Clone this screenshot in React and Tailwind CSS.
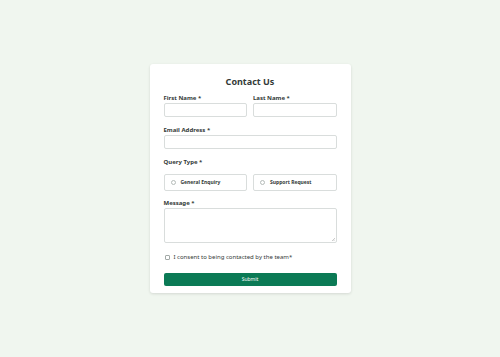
export default function App() {
  return (
    <div className="min-h-[357px] w-full bg-[#f0f6ef] pt-[64px] font-['Noto_Sans',sans-serif] text-[#333a38]">
      <div className="mx-auto w-[201px] rounded-[3px] bg-white px-[14px] pt-[12px] pb-[7px] shadow-[0_1px_3px_rgba(0,0,0,0.12)]">
        <h1 className="text-center text-[9px] leading-[12px] font-bold">Contact Us</h1>

        <div className="mt-[6px] flex gap-[6px]">
          <div className="flex-1">
            <p className="mb-[1px] text-[6px] leading-[8px] font-bold">First Name *</p>
            <div className="h-[14px] rounded-[2px] border border-[#d9dddc]" />
          </div>
          <div className="flex-1">
            <p className="mb-[1px] text-[6px] leading-[8px] font-bold">Last Name *</p>
            <div className="h-[14px] rounded-[2px] border border-[#d9dddc]" />
          </div>
        </div>

        <p className="mt-[9px] mb-[1px] text-[6px] leading-[8px] font-bold">Email Address *</p>
        <div className="h-[14px] rounded-[2px] border border-[#d9dddc]" />

        <p className="mt-[9px] text-[6px] leading-[8px] font-bold">Query Type *</p>
        <div className="mt-[8px] flex gap-[6px]">
          <div className="flex h-[17px] flex-1 items-center gap-[5px] rounded-[2px] border border-[#d9dddc] pl-[6px]">
            <span className="h-[5px] w-[5px] rounded-full border border-[#b5bbb9]" />
            <span className="text-[5px] font-bold">General Enquiry</span>
          </div>
          <div className="flex h-[17px] flex-1 items-center gap-[5px] rounded-[2px] border border-[#d9dddc] pl-[6px]">
            <span className="h-[5px] w-[5px] rounded-full border border-[#b5bbb9]" />
            <span className="text-[5px] font-bold">Support Request</span>
          </div>
        </div>

        <p className="mt-[8px] mb-[1px] text-[6px] leading-[8px] font-bold">Message *</p>
        <div className="relative h-[35px] rounded-[2px] border border-[#d9dddc]">
          <svg className="absolute right-[1px] bottom-[1px]" width="4" height="4" viewBox="0 0 4 4">
            <path d="M4 1 L1 4 M4 2.5 L2.5 4" stroke="#999" strokeWidth="0.5" />
          </svg>
        </div>

        <div className="mt-[10px] flex h-[8px] items-center gap-[4px] pl-[1px]">
          <span className="h-[5px] w-[5px] rounded-[1px] border border-[#a3aaa8]" />
          <span className="text-[6px] leading-[8px]">I consent to being contacted by the team*</span>
        </div>

        <div className="mt-[12px] flex h-[13px] items-center justify-center rounded-[2px] bg-[#0b7a55] text-[5px] text-white">
          Submit
        </div>
      </div>
    </div>
  )
}
